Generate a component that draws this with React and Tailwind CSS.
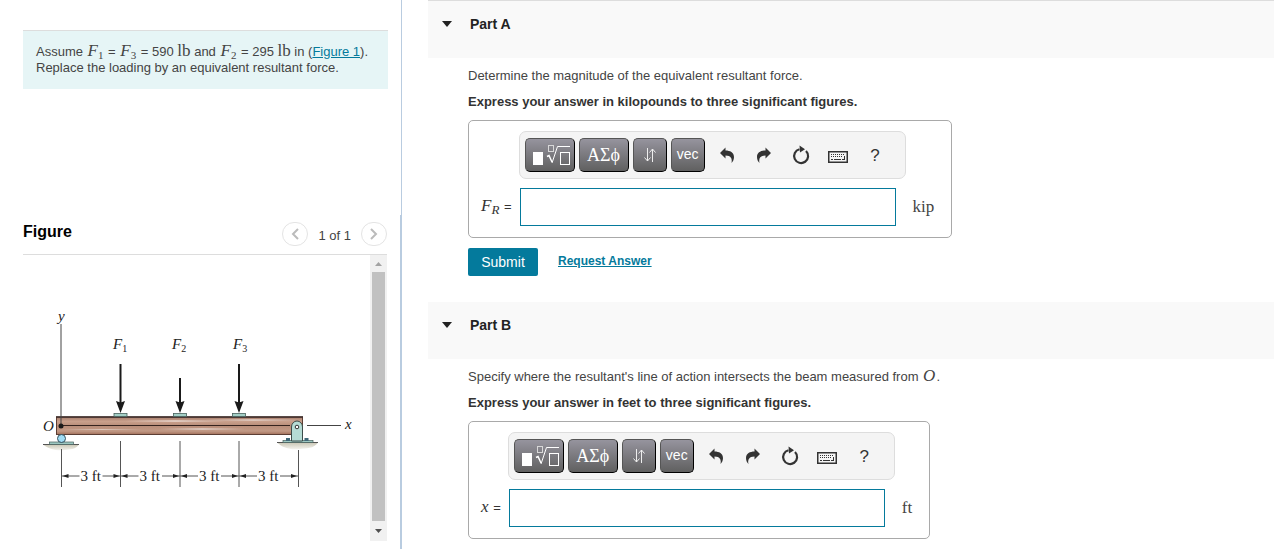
import React, { useState } from "react";

const MathVar = ({ name, sub, italicSub }) => (
  <span className="mx-px font-['Liberation_Serif',serif] text-[17px] leading-[0] italic">
    {name}
    {sub && (
      <span className={italicSub ? "relative top-[3px] text-[13px] italic" : "relative top-[3px] text-[11px] not-italic"}>
        {sub}
      </span>
    )}
  </span>
);

const Unit = ({ children }) => (
  <span className="font-['Liberation_Serif',serif] text-[17px] leading-[0]">{children}</span>
);

const TemplateIcon = () => (
  <svg width="48" height="32" viewBox="1 1 48 32" fill="none" stroke="#fff" aria-hidden="true">
    <rect x="8" y="14" width="10" height="13" fill="#fff" stroke="none" />
    <rect x="23.5" y="7.5" width="5" height="6" stroke="#d8d8d8" />
    <path d="M22 18.5l2-1 3 6.5" strokeWidth="1.5" />
    <path d="M27 25L32.5 8.5H45" />
    <rect x="35.5" y="14.5" width="9" height="12" />
  </svg>
);

const UpDownIcon = () => (
  <svg width="14" height="16" viewBox="0 0 14 16" fill="none" stroke="#eee" aria-hidden="true">
    <path d="M4.5 1v13M1.5 10.5l3 3.5 3-3.5M9.5 15V2M6.5 5.5l3-3.5 3 3.5" />
  </svg>
);

const UndoIcon = ({ flip }) => (
  <svg width="14" height="16" viewBox="0 0 14 16" className={flip ? "-scale-x-100" : ""} aria-hidden="true">
    <path
      d="M0 6L5.5 0.5V3.5C10 3.5 14 5.5 14 10C14 12.5 13 14.5 11.5 16C12.5 12 11 8.5 5.5 8.5V11.5Z"
      fill="#333"
    />
  </svg>
);

const ResetIcon = () => (
  <svg width="18" height="20" viewBox="0 0 18 20" fill="none" aria-hidden="true">
    <path d="M14 6A7 7 0 1 1 7.5 4.2" stroke="#333" strokeWidth="2.2" />
    <path d="M7.5 0.5L13 4.3L8 7.5Z" fill="#333" />
  </svg>
);

const KeyboardIcon = () => (
  <svg width="20" height="12" viewBox="0 0 20 12" fill="none" stroke="#333" aria-hidden="true">
    <rect x="0.75" y="0.75" width="18.5" height="10.5" strokeWidth="1.5" />
    <path d="M3 3.5H17M3 5.5H15" strokeDasharray="1 1" />
    <path d="M3 8.5H5M6 8.5H13M14 8.5H17M16.5 5V9" />
  </svg>
);

const keyClass =
  "flex h-[34px] items-center justify-center rounded-[5px] border border-t-[#555] border-l-[#555] border-r-black border-b-black bg-linear-to-b from-[#96949e] to-[#606060] text-white";
const toolClass = "flex h-[34px] w-[37px] items-center justify-center text-[#333]";

const Toolbar = () => (
  <div className="flex h-12 items-start rounded-[7px] border border-[#ddd] bg-[#f4f4f4] px-[5px] pt-[6px]">
    <div className="flex gap-1">
      <button type="button" aria-label="Templates" className={`${keyClass} w-[50px]`}>
        <TemplateIcon />
      </button>
      <button type="button" className={`${keyClass} w-[50px] font-['Liberation_Serif',serif] text-[18px] leading-none`}>
        ΑΣϕ
      </button>
      <button type="button" aria-label="Subscript and superscript" className={`${keyClass} w-[34px]`}>
        <UpDownIcon />
      </button>
      <button type="button" className={`${keyClass} w-[34px] pb-[2px] text-[14px] leading-none`}>
        vec
      </button>
    </div>
    <div className="ml-1 flex">
      <button type="button" aria-label="Undo" className={toolClass}>
        <UndoIcon />
      </button>
      <button type="button" aria-label="Redo" className={toolClass}>
        <UndoIcon flip />
      </button>
      <button type="button" aria-label="Reset" className={toolClass}>
        <ResetIcon />
      </button>
      <button type="button" aria-label="Keyboard shortcuts" className={`${toolClass} pt-1`}>
        <KeyboardIcon />
      </button>
      <button type="button" aria-label="Help" className={`${toolClass} text-[17px] leading-none`}>
        ?
      </button>
    </div>
  </div>
);

const AnswerBox = ({ id, label, unit }) => {
  const [value, setValue] = useState("");

  return (
    <div className="grid w-fit grid-cols-[auto_387px_auto] items-center gap-x-[7px] gap-y-[9px] rounded-[5px] border border-[#a9a9a9] pt-[10px] pr-[17px] pb-[11px] pl-[11px]">
      <div className="col-start-2">
        <Toolbar />
      </div>
      <label htmlFor={id} className="col-start-1 whitespace-nowrap text-[#333]">
        {label} =
      </label>
      <input
        id={id}
        type="text"
        value={value}
        onChange={(e) => setValue(e.target.value)}
        className="ml-px h-[38px] w-[376px] border border-[#047a9c] bg-white px-2 outline-none"
      />
      <Unit>{unit}</Unit>
    </div>
  );
};

const Part = ({ title, first, question, instruction, children }) => (
  <section>
    <header className={first ? "border-t border-[#ddd] bg-[#f9f9f9]" : "bg-[#f9f9f9]"}>
      <h2 className="h-[57px] pt-[13px]">
        <button type="button" aria-expanded="true" className="flex items-center gap-[18px] pl-[14px] text-[14px] leading-5 font-bold text-[#222]">
          <svg width="10" height="6" viewBox="0 0 10 6" aria-hidden="true">
            <path d="M0 0H10L5 6Z" fill="#222" />
          </svg>
          {title}
        </button>
      </h2>
    </header>
    <div className="flex flex-col gap-[10px] pt-[10px] pl-10">
      <p className="h-4">{question}</p>
      <p className="h-4 font-bold text-[#333]">{instruction}</p>
      {children}
    </div>
  </section>
);

const loads = [
  { x: 120.5, top: 364, labelX: 113, n: 1 },
  { x: 180, top: 378, labelX: 172, n: 2 },
  { x: 239, top: 364, labelX: 233, n: 3 },
];

const spans = [
  [61.5, 120.5],
  [120.5, 180],
  [180, 239],
  [239, 298],
];

const BeamFigure = () => (
  <svg
    width="347"
    height="286"
    viewBox="23 255 347 286"
    role="img"
    aria-label="Simply supported beam with three downward loads spaced 3 ft apart"
    className="shrink-0 font-['Liberation_Serif',serif]"
  >
    <defs>
      <linearGradient id="wood" x1="0" y1="0" x2="0" y2="1">
        <stop offset="0" stopColor="#a67c6b" />
        <stop offset="0.25" stopColor="#c9a08c" />
        <stop offset="0.5" stopColor="#b88d79" />
        <stop offset="0.8" stopColor="#c29a86" />
        <stop offset="1" stopColor="#a2705b" />
      </linearGradient>
      <linearGradient id="shine" x1="0" y1="0" x2="1" y2="0">
        <stop offset="0" stopColor="#fff" stopOpacity="0" />
        <stop offset="0.5" stopColor="#fff" stopOpacity="0.45" />
        <stop offset="1" stopColor="#fff" stopOpacity="0" />
      </linearGradient>
      <linearGradient id="ground" x1="0" y1="0" x2="0" y2="1">
        <stop offset="0" stopColor="#c9c6b4" />
        <stop offset="1" stopColor="#f4f3ee" />
      </linearGradient>
    </defs>

    {/* beam */}
    <rect x="56.5" y="417" width="246" height="17.5" fill="url(#wood)" stroke="#5c3e34" />
    <path d="M56 417H303" stroke="#3d2d2b" strokeWidth="1.5" />
    <rect x="125" y="420" width="100" height="2" fill="url(#shine)" />
    <rect x="160" y="428" width="85" height="2" fill="url(#shine)" />
    <rect x="205" y="419" width="97" height="2" fill="url(#shine)" />
    <rect x="62" y="429" width="80" height="1" fill="url(#shine)" />
    <path d="M61 425.5H290" stroke="#35231e" />

    {/* axes */}
    <path d="M61 324V426" stroke="#444" />
    <circle cx="61" cy="426" r="2.5" fill="#1a1a1a" />
    <path d="M307 425.5H341" stroke="#444" />
    <g fontStyle="italic" fontSize="15" fill="#222">
      <text x="58" y="321">y</text>
      <text x="43" y="431">O</text>
      <text x="345" y="429">x</text>
    </g>

    {/* roller at O */}
    <path d="M43 444.5H79C75 450 70 449 65 450C58 451 50 450 43 444.5Z" fill="url(#ground)" />
    <path d="M43 444.5H79" stroke="#555" />
    <rect x="49.5" y="442" width="24" height="2.5" fill="#9cc7c0" stroke="#48605c" strokeWidth="0.7" />
    <circle cx="61.5" cy="438.5" r="4" fill="#9fdcf5" stroke="#35505c" />

    {/* pin support */}
    <path d="M277 442.5H318C314 449 306 448 300 449C290 450 283 448 277 442.5Z" fill="url(#ground)" />
    <path d="M277 442.5H318" stroke="#555" />
    <rect x="283" y="440.5" width="30" height="2" fill="#9cc7c0" stroke="#48605c" strokeWidth="0.7" />
    <rect x="286" y="438" width="4" height="3" fill="#3f6878" />
    <rect x="304.5" y="438" width="4" height="3" fill="#3f6878" />
    <path d="M291.5 441V427A5.5 6 0 0 1 302.5 427V441Z" fill="#b5dcd5" stroke="#3d4d4b" />
    <circle cx="297" cy="427" r="1.8" fill="#fff" stroke="#333" />

    {/* loads */}
    {loads.map(({ x, top, labelX, n }) => (
      <g key={n}>
        <rect x={x - 6.5} y="413.5" width="13" height="3" fill="#a3cfc6" stroke="#48605c" strokeWidth="0.8" />
        <path d={`M${x} ${top}V404`} stroke="#1a1a1a" strokeWidth="2" />
        <path d={`M${x - 4.5} 401L${x} 402.5L${x + 4.5} 401L${x} 413Z`} fill="#1a1a1a" />
        <text x={labelX} y="349" fontSize="15" fontStyle="italic" fill="#222">
          F
          <tspan dy="3" fontSize="10" fontStyle="normal">{n}</tspan>
        </text>
      </g>
    ))}

    {/* dimensions */}
    <g stroke="#555" fill="none">
      <path d="M61.5 449V487M120.5 441V487M180 441V487M239 441V487M298.5 450V487" />
      {spans.map(([a, b]) => (
        <path key={a} d={`M${a} 476H${a + 18}M${b - 18} 476H${b}`} />
      ))}
    </g>
    {spans.map(([a, b]) => (
      <g key={a} fill="#222">
        <path d={`M${a + 1} 476l6-2v4zM${b - 1} 476l-6-2v4z`} />
        <text x={a + 19} y="481" fontSize="15">3 ft</text>
      </g>
    ))}
  </svg>
);

const FigurePanel = () => (
  <section className="flex-1 border-r-2 border-[#b9cce0] pt-[7px] pr-[13px] pb-2 pl-[23px]">
    <div className="flex items-center justify-between border-b border-[#ddd] pb-2">
      <h2 className="pb-1 text-[16px] leading-[18px] font-bold text-black">Figure</h2>
      <div className="flex items-center gap-[10px]">
        <button type="button" aria-label="Previous figure" className="flex h-6 w-[26px] items-center justify-center rounded-full border border-[#e4e4e4]">
          <svg width="8" height="12" viewBox="0 0 8 12" fill="none" stroke="#bbb" strokeWidth="2" aria-hidden="true">
            <path d="M7 1L2 6L7 11" />
          </svg>
        </button>
        <span className="pt-[3px]">1 of 1</span>
        <button type="button" aria-label="Next figure" className="flex h-6 w-[26px] items-center justify-center rounded-full border border-[#e4e4e4]">
          <svg width="8" height="12" viewBox="0 0 8 12" fill="none" stroke="#bbb" strokeWidth="2" aria-hidden="true">
            <path d="M1 1L6 6L1 11" />
          </svg>
        </button>
      </div>
    </div>
    <div className="flex justify-between">
      <BeamFigure />
      <div className="flex w-[17px] flex-col items-center bg-[#f1f1f1]">
        <div className="flex h-[17px] items-center">
          <svg width="7" height="4" viewBox="0 0 7 4" aria-hidden="true">
            <path d="M0 4L3.5 0L7 4Z" fill="#a3a3a3" />
          </svg>
        </div>
        <div className="w-[13px] flex-1 bg-[#c1c1c1]" />
        <div className="flex h-5 items-center">
          <svg width="7" height="4" viewBox="0 0 7 4" aria-hidden="true">
            <path d="M0 0L3.5 4L7 0Z" fill="#505050" />
          </svg>
        </div>
      </div>
    </div>
  </section>
);

const App = () => {
  return (
    <div className="flex bg-white font-['Liberation_Sans',Arial,sans-serif] text-[13px] leading-4 text-[#444]">
      <aside className="flex w-[402px] shrink-0 flex-col">
        <div className="h-[215px] border-r border-[#b9cce0] pt-[30px] pr-[13px] pl-[23px]">
          <div className="border-t border-[#ddd] bg-[#e6f5f6] p-[13px]">
            <p className="h-8 whitespace-nowrap">
              Assume <MathVar name="F" sub="1" /> = <MathVar name="F" sub="3" /> = 590 <Unit>lb</Unit> and{" "}
              <MathVar name="F" sub="2" /> = 295 <Unit>lb</Unit> in (
              <a href="#figure" className="text-[#047a9c] underline">Figure 1</a>).
              <br />
              Replace the loading by an equivalent resultant force.
            </p>
          </div>
        </div>
        <FigurePanel />
      </aside>

      <main className="mr-3 ml-[26px] flex flex-1 flex-col gap-[26px] pb-[10px]">
        <Part
          first
          title="Part A"
          question="Determine the magnitude of the equivalent resultant force."
          instruction="Express your answer in kilopounds to three significant figures."
        >
          <AnswerBox id="resultant" label={<MathVar name="F" sub="R" italicSub />} unit="kip" />
          <div className="flex items-center gap-5">
            <button type="button" className="h-7 w-[70px] rounded-[2px] bg-[#047a9c] text-[14px] text-white">
              Submit
            </button>
            <a href="#answer" className="pb-[2px] text-[12px] font-bold text-[#047a9c] underline">
              Request Answer
            </a>
          </div>
        </Part>

        <Part
          title="Part B"
          question={
            <>
              Specify where the resultant's line of action intersects the beam measured from <MathVar name="O" />.
            </>
          }
          instruction="Express your answer in feet to three significant figures."
        >
          <AnswerBox id="position" label={<MathVar name="x" />} unit="ft" />
        </Part>
      </main>
    </div>
  );
};

export default App;
